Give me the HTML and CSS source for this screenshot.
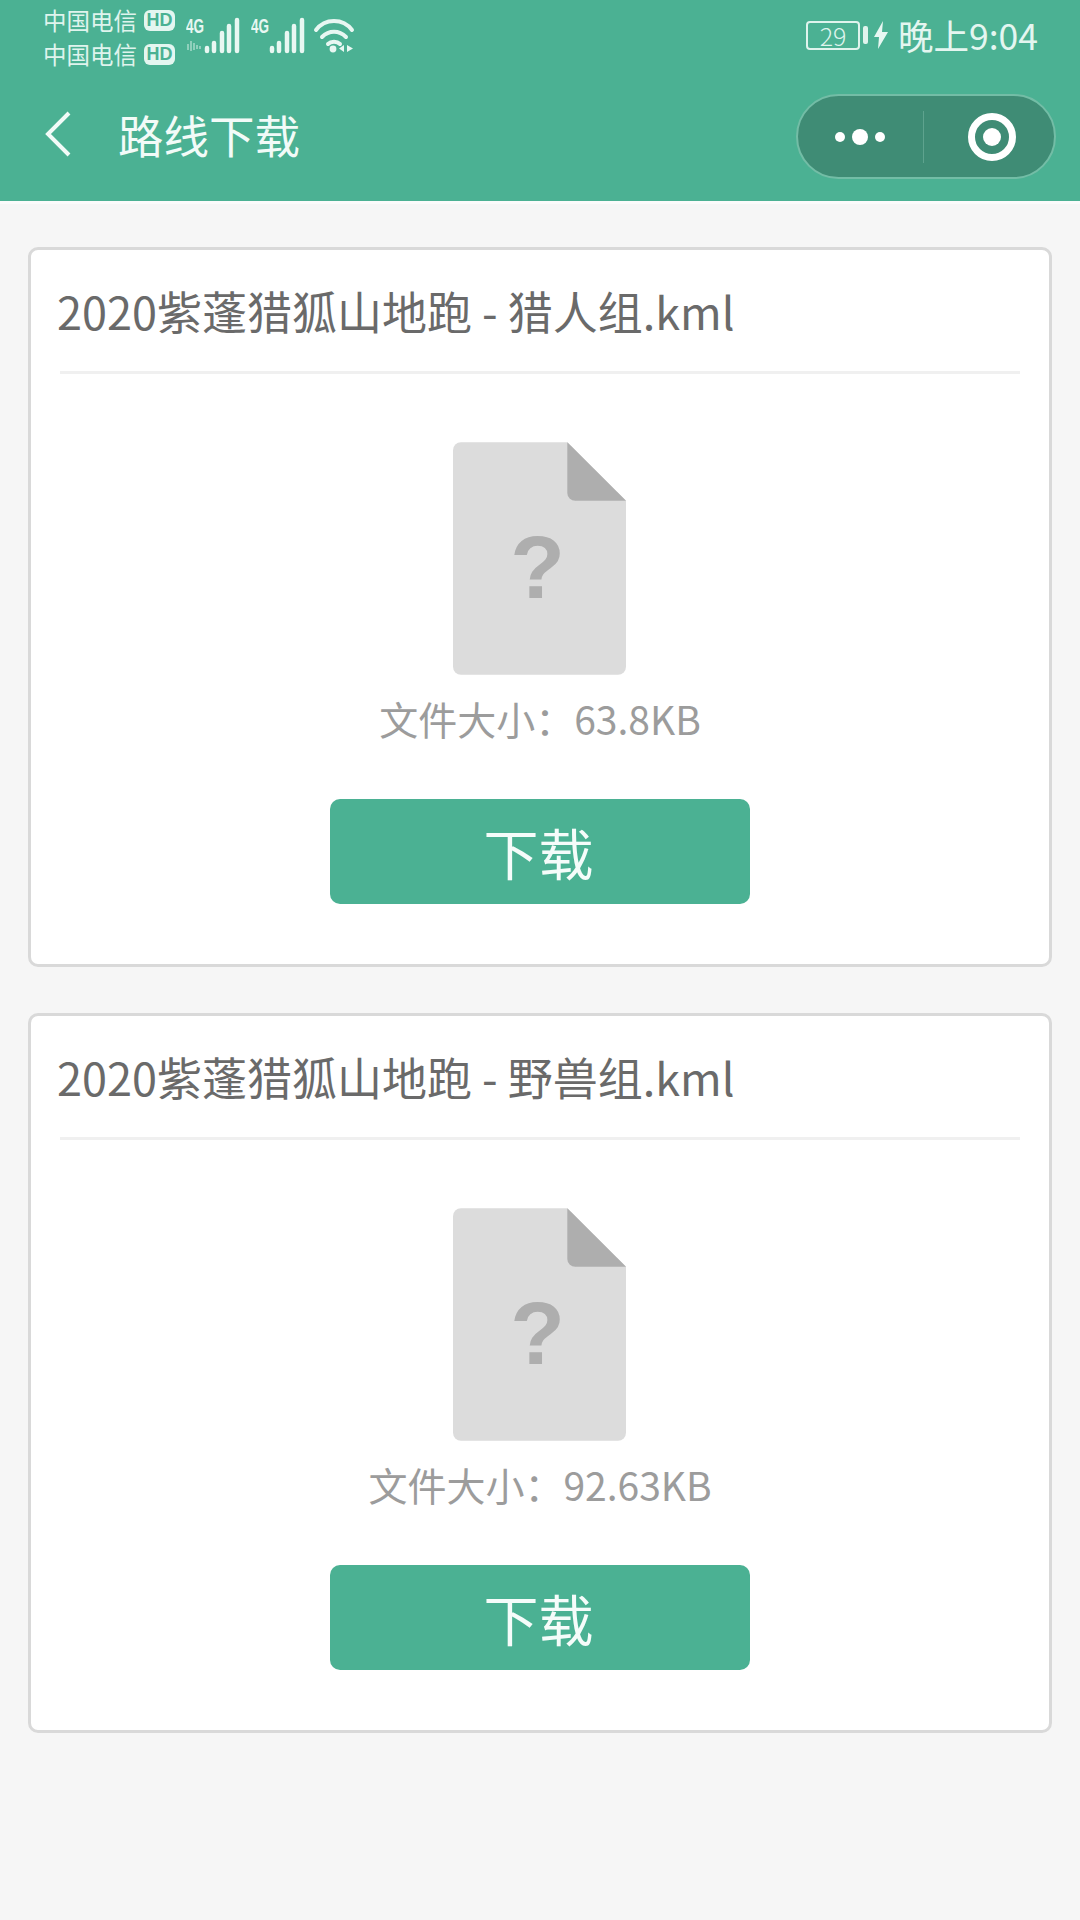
FILE: index.html
```html
<!DOCTYPE html>
<html lang="zh-CN">
<head>
    <meta charset="UTF-8">
    <meta name="viewport" content="width=device-width, initial-scale=1.0">
    <title>路线下载</title>
    <link rel="stylesheet" href="styles.css">
</head>
<body>
    <header class="top-bar">
        <div class="status-bar">
            <div class="carriers">
                <div class="carrier"><span>中国电信</span><span class="hd">HD</span></div>
                <div class="carrier"><span>中国电信</span><span class="hd">HD</span></div>
            </div>
            <svg class="signal" width="54" height="42" viewBox="0 -6 54 42">
                <text x="0" y="15" class="net" textLength="18" lengthAdjust="spacingAndGlyphs">4G</text>
                <path d="M2 26v6M5 23v10M8 25v7M11 27v4M14 28v3" class="faint"/>
                <path d="M21 30v3M28 25v8M36 15v18M43 8v25M51 2v31" class="bars"/>
            </svg>
            <svg class="signal" width="54" height="42" viewBox="0 -6 54 42">
                <text x="0" y="15" class="net" textLength="18" lengthAdjust="spacingAndGlyphs">4G</text>
                <path d="M21 30v3M28 25v8M36 15v18M43 8v25M51 2v31" class="bars"/>
            </svg>
            <svg class="wifi" width="42" height="36" viewBox="0 0 42 36">
                <path d="M3 12C12 0 30 0 39 12M9 19c7-7 17-7 24 0M15 26c3-3 9-3 12 0" class="wave"/>
                <circle cx="20" cy="31" r="3.4" fill="#e8f7f2"/>
                <path d="M31 27v7l-5-3.500zM34 27v7l6-3.500z" fill="#e8f7f2"/>
            </svg>
            <div class="status-right">
                <div class="battery">29</div>
                <div class="battery-tip"></div>
                <svg class="bolt" width="14" height="28" viewBox="0 0 14 28"><path d="M9 0L0 16h5L4 28l10-17H8z" fill="#e8f7f2"/></svg>
                <span class="clock">晚上9:04</span>
            </div>
        </div>
        <nav class="nav-bar">
            <svg class="back" width="26" height="46" viewBox="0 0 26 46"><path d="M24 2L3 23l21 21" fill="none" stroke="#f2fbf8" stroke-width="4"/></svg>
            <h1 class="page-title">路线下载</h1>
            <div class="capsule">
                <div class="capsule-side">
                    <i class="dot"></i><i class="dot dot-big"></i><i class="dot"></i>
                </div>
                <div class="capsule-line"></div>
                <div class="capsule-side capsule-close">
                    <div class="target"><i></i></div>
                </div>
            </div>
        </nav>
    </header>

    <main class="list">
        <section class="card">
            <div class="card-title">2020紫蓬猎狐山地跑 - 猎人组.kml</div>
            <div class="card-body">
                <svg class="file-icon" width="173" height="233" viewBox="0 0 174 234">
                    <path d="M8 0H115L174 59V226a8 8 0 0 1-8 8H8a8 8 0 0 1-8-8V8a8 8 0 0 1 8-8z" fill="#dcdcdc"/>
                    <path d="M115 0L174 59H123a8 8 0 0 1-8-8z" fill="#aeaeae"/>
                    <text x="85" y="157" class="file-mark">?</text>
                </svg>
                <div class="file-size">文件大小：63.8KB</div>
                <button class="download-btn">下载</button>
            </div>
        </section>
        <section class="card">
            <div class="card-title">2020紫蓬猎狐山地跑 - 野兽组.kml</div>
            <div class="card-body">
                <svg class="file-icon" width="173" height="233" viewBox="0 0 174 234">
                    <path d="M8 0H115L174 59V226a8 8 0 0 1-8 8H8a8 8 0 0 1-8-8V8a8 8 0 0 1 8-8z" fill="#dcdcdc"/>
                    <path d="M115 0L174 59H123a8 8 0 0 1-8-8z" fill="#aeaeae"/>
                    <text x="85" y="157" class="file-mark">?</text>
                </svg>
                <div class="file-size">文件大小：92.63KB</div>
                <button class="download-btn">下载</button>
            </div>
        </section>
    </main>
</body>
</html>
```

FILE: styles.css
```css
* {
    box-sizing: border-box;
}

body {
    margin: 0;
    background-color: #f6f6f6;
    font-family: 'Noto Sans CJK SC', 'Noto Sans', sans-serif;
    height: 1920px;
    overflow: hidden;
}

.top-bar {
    height: 201px;
    background-color: #4bb193;
    color: #f2fbf8;
    box-shadow: 0 3px 0 #fbfbfb;
}

.status-bar {
    height: 78px;
    padding: 3px 42px 0 43px;
    display: flex;
    align-items: flex-start;
}

.carriers {
    width: 143px;
    flex: none;
    color: #dff4ed;
}

.carrier {
    display: flex;
    align-items: center;
    height: 34px;
    font-size: 23.500px;
    line-height: 34px;
}

.hd {
    margin-left: 7px;
    width: 31px;
    height: 21px;
    border-radius: 6px;
    background-color: #e4f6f0;
    color: #4bb193;
    font-family: 'Liberation Sans', sans-serif;
    font-size: 18px;
    font-weight: bold;
    line-height: 21px;
    text-align: center;
}

.signal {
    margin: 9px 0 0 0;
    flex: none;
}

.signal + .signal {
    margin-left: 11px;
}

.net {
    font-family: 'Liberation Sans', sans-serif;
    font-size: 20px;
    font-weight: bold;
    fill: #e8f7f2;
}

.bars {
    fill: none;
    stroke: #e8f7f2;
    stroke-width: 4.5;
    stroke-linecap: round;
}

.faint {
    fill: none;
    stroke: #8fd0bc;
    stroke-width: 2;
}

.wifi {
    margin: 15px 0 0 8px;
    flex: none;
}

.wave {
    fill: none;
    stroke: #e8f7f2;
    stroke-width: 4;
    stroke-linecap: round;
}

.status-right {
    margin-left: auto;
    margin-top: 11px;
    display: flex;
    align-items: center;
    height: 42px;
}

.battery {
    width: 54px;
    height: 29px;
    border: 2px solid #dff4ed;
    border-radius: 4px;
    font-size: 25px;
    font-weight: 300;
    line-height: 24px;
    text-align: center;
    color: #dff4ed;
}

.battery-tip {
    width: 5px;
    height: 18px;
    margin-left: 3px;
    border-radius: 2px;
    background-color: #dff4ed;
}

.bolt {
    margin-left: 6px;
}

.clock {
    margin-left: 10px;
    font-size: 35.500px;
    line-height: 42px;
    color: #e4f6f0;
}

.nav-bar {
    height: 123px;
    padding: 0 24px 11px 45px;
    display: flex;
    align-items: center;
}

.back {
    flex: none;
}

.page-title {
    margin: 0 0 0 47px;
    font-size: 45.500px;
    font-weight: 400;
    line-height: 60px;
}

.capsule {
    margin: 5px 0 0 auto;
    width: 260px;
    height: 85px;
    border: 2px solid #73bda6;
    border-radius: 43px;
    background-color: #3f8c75;
    display: flex;
    align-items: center;
}

.capsule-side {
    flex: 1;
    display: flex;
    justify-content: center;
    align-items: center;
    gap: 7px;
}

.capsule-close {
    padding-left: 6px;
}

.capsule-line {
    width: 1px;
    height: 52px;
    background-color: #5ea38e;
}

.dot {
    width: 10px;
    height: 10px;
    border-radius: 50%;
    background-color: #fff;
}

.dot-big {
    width: 16px;
    height: 16px;
}

.target {
    width: 48px;
    height: 48px;
    border: 7px solid #fff;
    border-radius: 50%;
    display: flex;
    justify-content: center;
    align-items: center;
}

.target i {
    width: 18px;
    height: 18px;
    border-radius: 50%;
    background-color: #fff;
}

.list {
    padding: 46px 28px 0;
    display: flex;
    flex-direction: column;
    gap: 46px;
}

.card {
    height: 720px;
    background-color: #fff;
    border: 3px solid #d9d9d9;
    border-radius: 10px;
}

.card-title {
    height: 124px;
    margin: 0 29px 0 29px;
    border-bottom: 3px solid #f0f0f0;
    font-size: 45px;
    line-height: 122px;
    color: #6a6a6a;
    white-space: nowrap;
    text-indent: -3px;
}

.card-body {
    display: flex;
    flex-direction: column;
    align-items: center;
    padding-top: 68px;
}

.file-icon {
    flex: none;
    margin-right: 2px;
}

.file-mark {
    font-family: 'Liberation Sans', sans-serif;
    font-size: 90px;
    font-weight: bold;
    text-anchor: middle;
    fill: #aeaeae;
}

.file-size {
    margin-top: 13px;
    font-size: 39px;
    line-height: 60px;
    color: #9c9c9c;
}

.download-btn {
    margin-top: 51px;
    width: 420px;
    height: 105px;
    border: none;
    border-radius: 10px;
    background-color: #4bb193;
    color: #f5fcfa;
    font-family: inherit;
    font-size: 55px;
    line-height: 105px;
    padding: 0 3px 0 0;
}
```
